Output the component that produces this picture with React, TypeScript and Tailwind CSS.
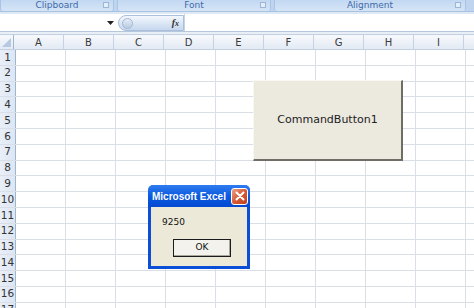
import React from "react";

const cols = ["A", "B", "C", "D", "E", "F", "G", "H", "I", ""];
const rows = Array.from({ length: 17 }, (_, i) => i + 1);

function GroupLabel({ label, width }: { label: string; width: string }) {
    return (
        <div className={`relative h-full ${width} flex items-center justify-center rounded-b-[3px] bg-gradient-to-b from-[#c2d8f2] to-[#d6e5f6] border-x border-[#aac4e6]`}>
            <span className="text-[9px] leading-none text-[#3e6aaa]">{label}</span>
            <span className="absolute right-[4px] top-[2px] w-[6px] h-[6px] border border-[#9db6d8] bg-[#e4eef9]" />
        </div>
    );
}

function CloseButton() {
    return (
        <div className="w-[17px] h-[17px] shrink-0 rounded-[3px] border border-white bg-gradient-to-br from-[#e9a089] via-[#d65a36] to-[#c1401d] flex items-center justify-center">
            <svg width="10" height="10" viewBox="0 0 10 10">
                <path d="M1.5 1.5 L8.5 8.5 M8.5 1.5 L1.5 8.5" stroke="white" strokeWidth="2" strokeLinecap="round" />
            </svg>
        </div>
    );
}

export default function App() {
    return (
        <div className="w-[474px] h-[308px] overflow-hidden bg-white relative" style={{ fontFamily: '"DejaVu Sans", "Liberation Sans", sans-serif' }}>
            {/* ribbon group labels */}
            <div className="h-[12px] flex gap-[3px] bg-[#bfd5ef] border-b border-[#a8c2e2]">
                <GroupLabel label="Clipboard" width="w-[114px]" />
                <GroupLabel label="Font" width="w-[154px]" />
                <GroupLabel label="Alignment" width="w-[192px]" />
            </div>
            <div className="h-[2px] bg-[#dfe9f5]" />

            {/* formula bar */}
            <div className="h-[18px] flex items-center bg-white border-b border-[#b6c6dc]">
                <div className="w-[118px] h-full flex items-center justify-end pr-[4px]">
                    <svg width="7" height="4" viewBox="0 0 7 4"><path d="M0 0 H7 L3.5 4 Z" fill="#222" /></svg>
                </div>
                <div className="w-[66px] h-[16px] relative flex items-center justify-end pr-[4px] rounded-l-full bg-gradient-to-b from-[#f4f8fd] via-[#dce7f5] to-[#c6d7ee] border border-[#a9bfdc]">
                    <span className="absolute left-[3px] top-[2px] w-[11px] h-[11px] rounded-full bg-gradient-to-b from-[#e6eef8] to-[#b9cbe2] border border-[#a3b8d4]" />
                    <span className="text-[10px] italic font-bold text-[#333]" style={{ fontFamily: '"Liberation Serif", serif' }}>f<span className="text-[8px]">x</span></span>
                </div>
                <div className="flex-1 h-full border-l border-[#c9d4e3]" />
            </div>
            <div className="h-[2px] bg-[#e9eff7]" />

            {/* grid */}
            <div className="flex flex-col">
                <div className="flex h-[16px] bg-gradient-to-b from-[#f7f9fc] to-[#e3eaf4] border-b border-[#9eb6ce] border-t border-[#c3d0e0]">
                    <div className="w-[16px] h-full border-r border-[#9eb6ce] flex items-end justify-end p-[2px]">
                        <svg width="9" height="9" viewBox="0 0 9 9"><path d="M9 0 V9 H0 Z" fill="#b5c9e2" /></svg>
                    </div>
                    {cols.map((c, i) => (
                        <div key={i} className="w-[50px] shrink-0 h-full border-r border-[#c5d2e3] flex items-center justify-center text-[10px] text-[#3a3a3a]">
                            {c}
                        </div>
                    ))}
                </div>
                {rows.map((r) => (
                    <div key={r} className="flex h-[15.8px] border-b border-[#dadfe7]">
                        <div className="w-[16px] shrink-0 h-full bg-gradient-to-r from-[#e9eff8] to-[#dde6f3] border-r border-[#9eb6ce] flex items-center justify-center text-[10.5px] text-[#333]">
                            {r}
                        </div>
                        {cols.map((_, i) => (
                            <div key={i} className="w-[50px] shrink-0 h-full border-r border-[#dadfe7]" />
                        ))}
                    </div>
                ))}
            </div>

            {/* command button */}
            <div className="absolute left-[253px] top-[80px] w-[150px] h-[81px] bg-[#ece9df] border-r-2 border-b-2 border-[#6f6d66] border-t border-l border-t-[#f8f7f2] border-l-[#f8f7f2] flex items-center justify-center">
                <span className="text-[11px] text-[#222]">CommandButton1</span>
            </div>

            {/* message box */}
            <div className="absolute left-[148px] top-[185px] w-[102px] h-[84px] bg-[#0a4fd6] rounded-t-[6px] p-[3px] pt-0 flex flex-col">
                <div className="h-[22px] flex items-center justify-between bg-gradient-to-b from-[#2f7bf0] via-[#0a5ae0] to-[#0549d2] rounded-t-[5px] -mx-[3px] pl-[4px] pr-[2px]">
                    <span className="text-[10px] font-bold text-white whitespace-nowrap" style={{ fontFamily: '"Liberation Sans", sans-serif' }}>Microsoft Excel</span>
                    <CloseButton />
                </div>
                <div className="flex-1 bg-[#ece9d8] flex flex-col px-[11px] pt-[9px]">
                    <span className="text-[9px] text-[#111]">9250</span>
                    <div className="mt-[9px] ml-[11px] w-[58px] h-[18px] border border-[#1c1c1c] bg-[#f3f2ec] flex items-center justify-center shadow-[inset_-1px_-1px_0_#a9a79c]">
                        <span className="text-[9px] text-[#111]">OK</span>
                    </div>
                </div>
            </div>
        </div>
    );
}
